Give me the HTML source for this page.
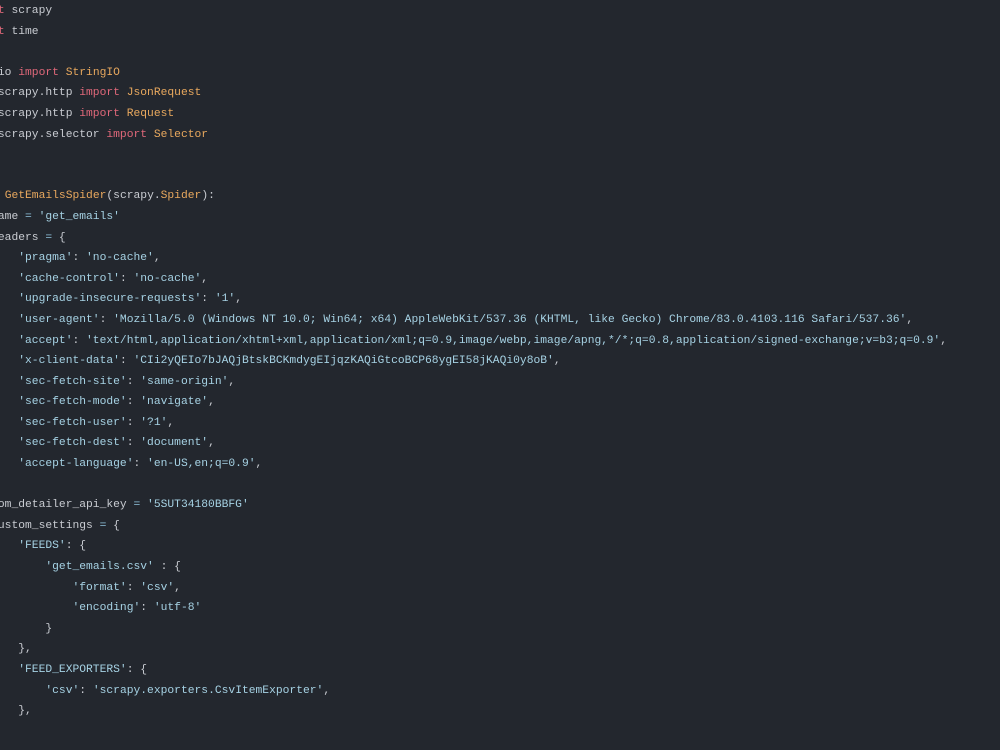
<!DOCTYPE html>
<html><head><meta charset="utf-8"><style>
html,body{margin:0;padding:0;background:#23272e;width:1000px;height:750px;overflow:hidden}
pre{position:absolute;left:-36px;top:1px;margin:0;font-family:"Liberation Mono",monospace;font-size:11.3px;line-height:20.6px;color:#c9ccd2;white-space:pre}
.k{color:#e0687a}.c{color:#e8a85e}.s{color:#a6d2e4}.o{color:#8fc3dc}
</style></head><body><pre><span class="k">import</span> scrapy
<span class="k">import</span> time

from io <span class="k">import</span> <span class="c">StringIO</span>
from scrapy.http <span class="k">import</span> <span class="c">JsonRequest</span>
from scrapy.http <span class="k">import</span> <span class="c">Request</span>
from scrapy.selector <span class="k">import</span> <span class="c">Selector</span>


<span class="k">class</span> <span class="c">GetEmailsSpider</span>(scrapy.<span class="c">Spider</span>):
    name <span class="o">=</span> <span class="s">'get_emails'</span>
    headers <span class="o">=</span> {
        <span class="s">'pragma'</span>: <span class="s">'no-cache'</span>,
        <span class="s">'cache-control'</span>: <span class="s">'no-cache'</span>,
        <span class="s">'upgrade-insecure-requests'</span>: <span class="s">'1'</span>,
        <span class="s">'user-agent'</span>: <span class="s">'Mozilla/5.0 (Windows NT 10.0; Win64; x64) AppleWebKit/537.36 (KHTML, like Gecko) Chrome/83.0.4103.116 Safari/537.36'</span>,
        <span class="s">'accept'</span>: <span class="s">'text/html,application/xhtml+xml,application/xml;q=0.9,image/webp,image/apng,*/*;q=0.8,application/signed-exchange;v=b3;q=0.9'</span>,
        <span class="s">'x-client-data'</span>: <span class="s">'CIi2yQEIo7bJAQjBtskBCKmdygEIjqzKAQiGtcoBCP68ygEI58jKAQi0y8oB'</span>,
        <span class="s">'sec-fetch-site'</span>: <span class="s">'same-origin'</span>,
        <span class="s">'sec-fetch-mode'</span>: <span class="s">'navigate'</span>,
        <span class="s">'sec-fetch-user'</span>: <span class="s">'?1'</span>,
        <span class="s">'sec-fetch-dest'</span>: <span class="s">'document'</span>,
        <span class="s">'accept-language'</span>: <span class="s">'en-US,en;q=0.9'</span>,
    }
    zom_detailer_api_key <span class="o">=</span> <span class="s">'5SUT34180BBFG'</span>
    custom_settings <span class="o">=</span> {
        <span class="s">'FEEDS'</span>: {
            <span class="s">'get_emails.csv'</span> : {
                <span class="s">'format'</span>: <span class="s">'csv'</span>,
                <span class="s">'encoding'</span>: <span class="s">'utf-8'</span>
            }
        },
        <span class="s">'FEED_EXPORTERS'</span>: {
            <span class="s">'csv'</span>: <span class="s">'scrapy.exporters.CsvItemExporter'</span>,
        },
</pre></body></html>
